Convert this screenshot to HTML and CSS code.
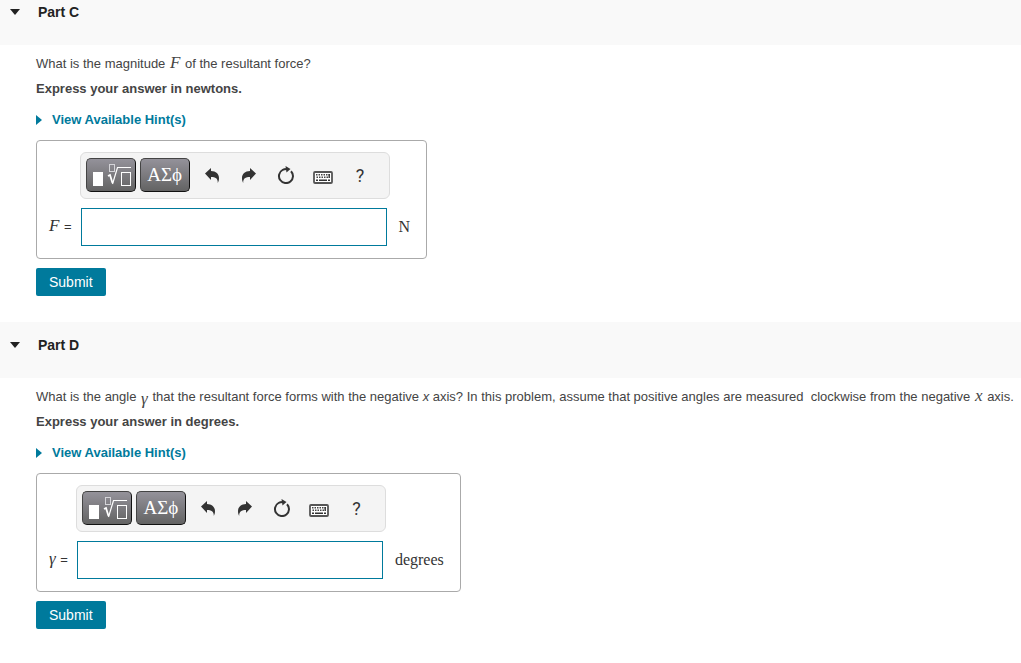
FILE: index.html
```html
<!DOCTYPE html>
<html lang="en">
<head>
    <meta charset="UTF-8">
    <meta name="viewport" content="width=device-width, initial-scale=1.0">
    <title>Resultant force</title>
    <link rel="stylesheet" href="styles.css">
</head>
<body>
    <!-- toolbar icons shared by both parts -->
    <svg class="sprite" aria-hidden="true">
        <symbol id="icon-template" viewBox="0 0 40 26">
            <rect x="2" y="10" width="10" height="14" fill="#fff"/>
            <rect x="18.500" y="2.500" width="5" height="7" fill="none" stroke="#d4d4d8"/>
            <path d="M17 14l2-1 2.500 8" fill="none" stroke="#fff" stroke-width="1.800"/>
            <path d="M21.500 22l5-16.500H40" fill="none" stroke="#fff" stroke-width="1.200"/>
            <rect x="30.500" y="10.500" width="9" height="13" fill="none" stroke="#fff"/>
        </symbol>
        <symbol id="icon-undo" viewBox="0 0 14 15">
            <path d="M0 5.500L6 0v3c5 .2 8 3 8 7 0 2-.4 3.500-1.200 5 .2-4.500-2.300-6-6.800-6V12z"/>
        </symbol>
        <symbol id="icon-redo" viewBox="0 0 14 15">
            <path d="M14 5.500L8 0v3c-5 .2-8 3-8 7 0 2 .4 3.500 1.200 5-.2-4.500 2.300-6 6.800-6V12z"/>
        </symbol>
        <symbol id="icon-reset" viewBox="0 0 18 18">
            <path d="M14 5.200A7 7 0 1 1 5.500 4C6.500 3.300 8 3 10 3" fill="none" stroke="#333" stroke-width="2"/>
            <path d="M8.500 0l5 3-4 3.500z"/>
        </symbol>
        <symbol id="icon-keyboard" viewBox="0 0 20 13">
            <rect x="1" y="1" width="18" height="11" rx="1" fill="#fff" stroke="#555" stroke-width="1.800"/>
            <path d="M3 3.700h14M3.500 6.200h13" fill="none" stroke="#444" stroke-width="1.400" stroke-dasharray="1.500 1"/>
            <path d="M3 9.200h2M6 9.200h8M15 9.200h2M16.200 3v4" fill="none" stroke="#333" stroke-width="1.400"/>
        </symbol>
    </svg>

    <section class="part">
        <header class="part-header first">
            <span class="caret"></span>
            <h2>Part C</h2>
        </header>
        <div class="part-body">
            <p>What is the magnitude <i class="math">F</i> of the resultant force?</p>
            <p class="instructions">Express your answer in newtons.</p>
            <a class="hints" href="#">View Available Hint(s)</a>
            <form>
                <div class="answer">
                    <div class="toolbar">
                        <button type="button" class="dark" aria-label="Templates"><svg width="40" height="26"><use href="#icon-template"/></svg></button>
                        <button type="button" class="dark">ΑΣϕ</button>
                        <button type="button" class="tool" aria-label="Undo"><svg width="14" height="15"><use href="#icon-undo"/></svg></button>
                        <button type="button" class="tool" aria-label="Redo"><svg width="14" height="15"><use href="#icon-redo"/></svg></button>
                        <button type="button" class="tool" aria-label="Reset"><svg width="18" height="18"><use href="#icon-reset"/></svg></button>
                        <button type="button" class="tool keyboard" aria-label="Keyboard shortcuts"><svg width="20" height="13"><use href="#icon-keyboard"/></svg></button>
                        <button type="button" class="tool">?</button>
                    </div>
                    <label for="force"><i class="math">F</i> =</label>
                    <input type="text" id="force">
                    <span class="unit">N</span>
                </div>
                <button type="submit" class="submit">Submit</button>
            </form>
        </div>
    </section>

    <section class="part">
        <header class="part-header">
            <span class="caret"></span>
            <h2>Part D</h2>
        </header>
        <div class="part-body">
            <p>What is the angle <i class="math gamma">γ</i> that the resultant force forms with the negative <i>x</i> axis? In this problem, assume that positive angles are measured &nbsp;clockwise from the negative <i class="math">x</i> axis.</p>
            <p class="instructions">Express your answer in degrees.</p>
            <a class="hints" href="#">View Available Hint(s)</a>
            <form>
                <div class="answer">
                    <div class="toolbar">
                        <button type="button" class="dark" aria-label="Templates"><svg width="40" height="26"><use href="#icon-template"/></svg></button>
                        <button type="button" class="dark">ΑΣϕ</button>
                        <button type="button" class="tool" aria-label="Undo"><svg width="14" height="15"><use href="#icon-undo"/></svg></button>
                        <button type="button" class="tool" aria-label="Redo"><svg width="14" height="15"><use href="#icon-redo"/></svg></button>
                        <button type="button" class="tool" aria-label="Reset"><svg width="18" height="18"><use href="#icon-reset"/></svg></button>
                        <button type="button" class="tool keyboard" aria-label="Keyboard shortcuts"><svg width="20" height="13"><use href="#icon-keyboard"/></svg></button>
                        <button type="button" class="tool">?</button>
                    </div>
                    <label for="angle"><i class="math">γ</i> =</label>
                    <input type="text" id="angle">
                    <span class="unit">degrees</span>
                </div>
                <button type="submit" class="submit">Submit</button>
            </form>
        </div>
    </section>
</body>
</html>
```

FILE: styles.css
```css
* {
    box-sizing: border-box;
}
body {
    margin: 0;
    font-family: "Liberation Sans", Arial, sans-serif;
    font-size: 13px;
    line-height: 20px;
    color: #444;
    background-color: #fff;
}
.sprite {
    display: none;
}
.part {
    margin-bottom: 26px;
}
.part-header {
    display: flex;
    align-items: flex-start;
    gap: 18px;
    height: 56px;
    padding: 13px 10px 0;
    background-color: #f9f9f9;
}
.part-header.first {
    height: 45px;
    padding-top: 2px;
}
.part-header h2 {
    margin: 0;
    font-size: 14px;
    line-height: 20px;
    color: #222;
}
.caret {
    margin-top: 7px;
    border: 5px solid transparent;
    border-top: 6px solid #222;
    border-bottom: 0;
}
.part-body {
    padding: 9px 0 0 36px;
}
p {
    margin: 0 0 5px;
}
.instructions {
    font-weight: bold;
    margin-bottom: 11px;
}
.math {
    margin: 0 1px;
    font-family: "Liberation Serif", "Times New Roman", serif;
    font-size: 17px;
    line-height: 16px;
}
.gamma {
    vertical-align: -3px;
}
.hints {
    display: flex;
    align-items: center;
    gap: 10px;
    width: max-content;
    margin-bottom: 10px;
    font-weight: bold;
    color: #007a9c;
    text-decoration: none;
}
.hints::before {
    content: "";
    border: 5px solid transparent;
    border-left: 6px solid #007a9c;
    border-right: 0;
}
.answer {
    display: grid;
    grid-template-columns: auto 306px auto;
    align-items: center;
    row-gap: 9px;
    width: max-content;
    padding: 11px 16px 12px 11px;
    border: 1px solid #aaa;
    border-radius: 4px;
    color: #333;
}
.toolbar {
    grid-column: 2 / 4;
    display: flex;
    align-items: flex-start;
    width: 310px;
    height: 47px;
    margin-left: -1px;
    padding: 5px;
    background-color: #f4f4f4;
    border: 1px solid #ddd;
    border-radius: 6px;
}
.toolbar button {
    display: flex;
    align-items: center;
    justify-content: center;
    padding: 0;
}
.dark {
    width: 50px;
    height: 34px;
    margin-right: 4px;
    font-family: "Liberation Serif", "Times New Roman", serif;
    font-size: 19px;
    color: #fff;
    background: linear-gradient(#94929a, #636363);
    border: 1px solid #111;
    border-top-color: #444;
    border-left-color: #444;
    border-radius: 5px;
}
.tool {
    width: 37px;
    height: 34px;
    font-family: Roboto, sans-serif;
    font-size: 18px;
    color: #333;
    fill: #333;
    background: none;
    border: 0;
}
.keyboard svg {
    margin-top: 4px;
}
.answer label {
    padding-right: 9px;
}
.answer input {
    width: 306px;
    height: 38px;
    padding: 0 8px;
    font-size: 16px;
    border: 1px solid #007a9c;
    outline: none;
}
.unit {
    padding-left: 12px;
    font-family: "Liberation Serif", "Times New Roman", serif;
    font-size: 16px;
}
.submit {
    display: block;
    height: 28px;
    margin-top: 9px;
    padding: 0 13px;
    font-family: inherit;
    font-size: 14px;
    color: #fff;
    background-color: #007a9c;
    border: 0;
    border-radius: 2px;
}
```
